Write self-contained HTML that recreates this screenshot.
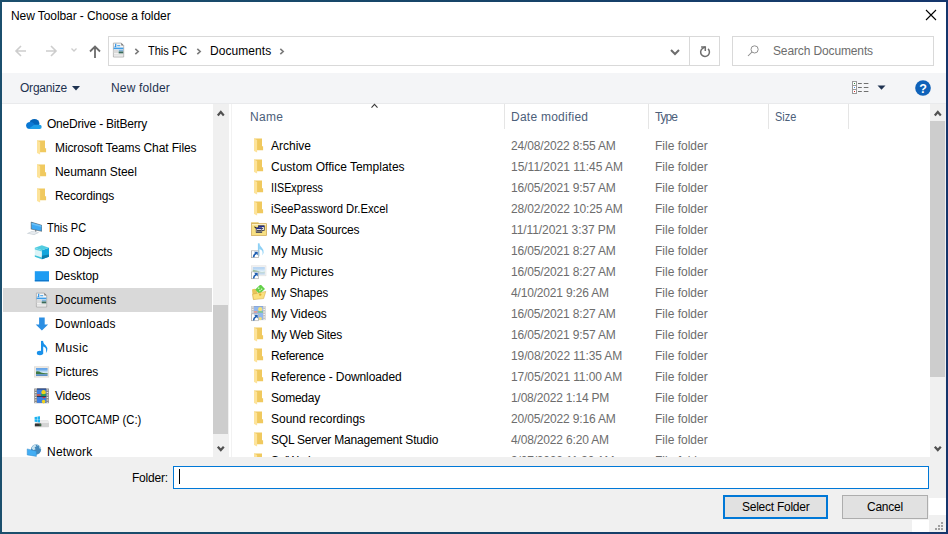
<!DOCTYPE html>
<html><head><meta charset="utf-8">
<style>
*{box-sizing:border-box}
html,body{margin:0;padding:0}
body{width:948px;height:534px;position:relative;overflow:hidden;background:#fff;font-family:"Liberation Sans",sans-serif;font-size:12px;color:#000}
.a{position:absolute}
.t{position:absolute;line-height:16px;white-space:nowrap}
svg{position:absolute;overflow:visible}
.hd{color:#4c607a}
.g{color:#6d6d6d}
.nv{color:#1e3250}
</style></head><body>
<svg width="0" height="0" style="position:absolute;left:0;top:0"><defs>
<linearGradient id="sky" x1="0" y1="0" x2="0" y2="1"><stop offset="0" stop-color="#3d8ee6"/><stop offset="0.5" stop-color="#cfe6f5"/><stop offset="1" stop-color="#e6f2f8"/></linearGradient>
<linearGradient id="skyl" x1="0" y1="0" x2="0" y2="1"><stop offset="0" stop-color="#a9cdf2"/><stop offset="0.6" stop-color="#e4f1f8"/><stop offset="1" stop-color="#eef6fa"/></linearGradient>
<symbol id="fold" viewBox="0 0 16 16">
  <path d="M3 0.5H11V8.2H12.1V12.2H3Z" fill="#f0c95f"/>
  <path d="M3 0.6L6.1 2V14.4L3 12.9Z" fill="#fde39a"/>
</symbol>
<symbol id="cloud" viewBox="0 0 16 16">
  <ellipse cx="8.4" cy="7.4" rx="5" ry="4.4" fill="#0364b8"/>
  <ellipse cx="4.3" cy="9.6" rx="4.2" ry="3.5" fill="#0a78d4"/>
  <path d="M2.2 13.1L8.2 8.7H13.4A2.2 2.2 0 0 1 13.6 13.1Z" fill="#1d9ee8"/>
</symbol>
<symbol id="pc" viewBox="0 0 16 16">
  <path d="M0.6 13.4L6 10.9L13.4 12.4L8.2 15Z" fill="#ccd3d9"/>
  <path d="M2.5 13.3L6.2 11.6L11.6 12.6L8 14.3Z" fill="#e6eaee"/>
  <rect x="9" y="9.6" width="1.4" height="2.2" fill="#9aa0a6"/>
  <path d="M5.2 2.1L15.75 5.3V11.3L5.2 9.1Z" fill="#3ea9f4" stroke="#3d3d3d" stroke-width="0.5"/>
  <path d="M5.6 2.7L15.3 5.6V7L5.6 4.6Z" fill="#6cc0f7"/>
</symbol>
<symbol id="cube" viewBox="0 0 16 16">
  <path d="M0.8 3.8L7.9 6.3V15.2L0.8 12.7Z" fill="#dcf4f7"/>
  <path d="M7.9 6.3L15 3.8V12.7L7.9 15.2Z" fill="#12a6dc"/>
  <path d="M0.8 3.8L7.9 1.3L15 3.8L7.9 6.3Z" fill="#52cce0"/>
  <path d="M0.8 3.8L7.9 6.3V7.6L0.8 5.4Z" fill="#62d2e4"/>
  <path d="M0.8 11.2L7.9 13.5V15.2L0.8 12.7Z" fill="#3cc2d9"/>
  <path d="M7.9 11.8L15 10.6V12.7L7.9 15.2Z" fill="#0b7fae"/>
</symbol>
<symbol id="desk" viewBox="0 0 16 16">
  <rect x="0.8" y="3.2" width="14.2" height="10.1" fill="#1e9cf2"/>
  <rect x="0.8" y="12.2" width="14.2" height="1.1" fill="#0c6fc4"/>
</symbol>
<symbol id="docs" viewBox="0 0 16 16">
  <path d="M2.4 1.1H10.3L12.7 3.5V15H2.4Z" fill="#f7f7f7" stroke="#a8a8a8" stroke-width="0.8"/>
  <path d="M10.3 1.1V3.5H12.7Z" fill="#6b6b6b"/>
  <path d="M4.1 1.8H5.3V5.2H3.5V4.2H4.1Z" fill="#2b8fe3"/>
  <rect x="6.2" y="3" width="3" height="1.3" fill="#5eaeea"/>
  <rect x="2.6" y="5.6" width="9.8" height="1.6" fill="#3d9de9"/>
  <rect x="2.6" y="7.7" width="4.4" height="3.5" fill="#dadada"/>
  <rect x="7.6" y="7.7" width="4.6" height="1.8" fill="#7fb2da"/>
  <rect x="7.6" y="9.5" width="4.6" height="1.9" fill="#3a6a58"/>
  <rect x="2.6" y="12.4" width="9.8" height="1" fill="#d4d4d4"/>
</symbol>
<symbol id="down" viewBox="0 0 16 16">
  <path d="M5.1 1.5H10.7V8.5H14.1L7.9 14.6L1.7 8.5H5.1Z" fill="#2c8fe3"/>
</symbol>
<symbol id="music" viewBox="0 0 16 16">
  <rect x="7" y="0.9" width="2.2" height="13" fill="#1a91ea"/>
  <ellipse cx="5.9" cy="13" rx="3.1" ry="2.2" fill="#1a91ea"/>
  <path d="M8.5 0.9Q9.6 3.6 11.8 5.6Q13.9 7.6 13.2 10.6L11.9 13.2Q12.6 9.6 11.6 8.1Q10.6 6.9 8.5 6.2Z" fill="#1a91ea"/>
</symbol>
<symbol id="pics" viewBox="0 0 16 16">
  <rect x="0.6" y="2.8" width="14.2" height="10.3" fill="#efebe5" stroke="#d6d2cc" stroke-width="0.6"/>
  <rect x="2" y="4.2" width="11.6" height="7.8" fill="url(#sky)"/>
  <path d="M2 7.4Q5 6.8 7 8.6Q10 9.6 13.6 9.2V10.2H2Z" fill="#3f7a45"/>
  <rect x="2" y="10.2" width="11.6" height="1.8" fill="#5b8fc4"/>
</symbol>
<symbol id="vids" viewBox="0 0 16 16">
  <rect x="0.2" y="0.5" width="14.7" height="14.7" fill="#8a8a8a"/>
  <g fill="#e6e6e6"><rect x="0.9" y="1.5" width="1.6" height="1"/><rect x="0.9" y="4" width="1.6" height="1"/><rect x="0.9" y="6.5" width="1.6" height="1"/><rect x="0.9" y="9" width="1.6" height="1"/><rect x="0.9" y="11.5" width="1.6" height="1"/><rect x="0.9" y="14" width="1.6" height="0.8"/>
  <rect x="12.6" y="1.5" width="1.6" height="1"/><rect x="12.6" y="4" width="1.6" height="1"/><rect x="12.6" y="6.5" width="1.6" height="1"/><rect x="12.6" y="9" width="1.6" height="1"/><rect x="12.6" y="11.5" width="1.6" height="1"/><rect x="12.6" y="14" width="1.6" height="0.8"/></g>
  <rect x="3" y="1.2" width="9.2" height="13.6" fill="#3b7fe3"/>
  <rect x="3" y="0.5" width="9.2" height="1" fill="#1b3570"/>
  <circle cx="9.6" cy="4.2" r="2.2" fill="#f1d21c"/>
  <rect x="6.8" y="6.2" width="5.4" height="1.6" fill="#2aa23e"/>
  <rect x="3" y="6.2" width="3.6" height="1.6" fill="#e2503a"/>
  <rect x="3" y="8" width="9.2" height="0.7" fill="#222"/>
  <circle cx="9.6" cy="13.6" r="1.8" fill="#f1d21c"/>
  <rect x="8.6" y="9" width="2.6" height="1.2" fill="#d33"/>
</symbol>
<symbol id="drive" viewBox="0 0 16 16">
  <path d="M1.2 11.2L3.4 8.2H14L15 11.2V14.6Q15 15.2 14.4 15.2H1.2Q0.6 15.2 0.6 14.6V11.8Z" fill="#d4d4d4"/>
  <path d="M3.4 8.2H14L14.9 11H1.3Z" fill="#ededed"/>
  <rect x="0.9" y="11.6" width="6.4" height="2.6" rx="0.5" fill="#333"/>
  <rect x="5.5" y="12.5" width="1.4" height="0.9" fill="#3cc15a"/>
  <path d="M0.6 5.1L3 4.7V7.2H0.6Z M3.4 4.6L6 4.2V7.2H3.4Z M0.6 7.6H3V10.1L0.6 9.8Z M3.4 7.6H6V10.6L3.4 10.2Z" fill="#1db2f0"/>
</symbol>
<symbol id="net" viewBox="0 0 16 16">
  <circle cx="10" cy="6.6" r="5.1" fill="#4388ba"/>
  <path d="M5.4 5.2Q6.5 2.4 9.2 1.6L10.4 3.2L8.6 4.6L9.6 6.2L7.4 7.2Z" fill="#c6e2ef"/>
  <path d="M12.6 2.3Q14.8 3.8 15 6.4L13.6 5.6L13 3.8Z" fill="#b8dbec"/>
  <path d="M10.8 1.5Q12 1.7 12.6 2.3L11.4 3Z" fill="#9fcfe6"/>
  <path d="M1.2 5.9L10.4 8.2V13.4L1.2 11.9Z" fill="#43aef4" stroke="#2f86c8" stroke-width="0.45"/>
</symbol>
<symbol id="ds" viewBox="0 0 16 16">
  <path d="M0.6 0H6.8L8.2 1.7H0.6Z" fill="#f3e29a" stroke="#d8bc6a" stroke-width="0.5"/>
  <rect x="0.6" y="1.7" width="15" height="11.7" fill="#f7e083" stroke="#cda24a" stroke-width="0.7"/>
  <rect x="1" y="2" width="14" height="1.2" fill="#fbf0c2"/>
  <path d="M3 4.4L5 5L4.5 6.8Z" fill="#111"/>
  <rect x="7.6" y="3.8" width="5.6" height="4.6" fill="#fff" stroke="#151530" stroke-width="0.7"/>
  <rect x="7.6" y="3.8" width="5.6" height="1.3" fill="#23308f"/>
  <rect x="8.4" y="6" width="3.4" height="0.9" fill="#222"/>
  <rect x="5.2" y="5.8" width="5.6" height="4.8" fill="#fff" stroke="#151530" stroke-width="0.7"/>
  <rect x="5.2" y="5.8" width="5.6" height="1.3" fill="#23308f"/>
  <rect x="6" y="7.9" width="4" height="0.9" fill="#222"/>
  <rect x="6" y="9.3" width="4" height="0.8" fill="#444"/>
</symbol>
<symbol id="sc" viewBox="0 0 8 8">
  <rect x="0.4" y="0.4" width="7.2" height="7.2" fill="#fff" stroke="#a9a9a9" stroke-width="0.8"/>
  <path d="M3.1 1.4H6.9V5.2Z" fill="#1f5eb0"/><path d="M2.7 7.2Q2.6 4.6 5.3 3.1" stroke="#1f5eb0" stroke-width="1.7" fill="none"/>
</symbol>
<symbol id="mmus" viewBox="0 0 16 16">
  <rect x="6.9" y="0.3" width="1.6" height="13" fill="#8dd0f5"/>
  <path d="M8.2 0.3Q9 3 10.9 4.8Q13 6.8 12.6 9.8L11.4 12.6Q12 9.2 11.2 7.8Q10.2 6.6 8.2 6Z" fill="#8dd0f5"/>
  <use href="#sc" x="0" y="7.3" width="7.8" height="7.8"/>
</symbol>
<symbol id="mpic" viewBox="0 0 16 16">
  <rect x="0.4" y="1.8" width="14.6" height="10" fill="#f2f2f2" stroke="#e0e0e0" stroke-width="0.6"/>
  <rect x="1.8" y="3.2" width="12" height="7.4" fill="url(#skyl)"/>
  <path d="M1.8 5.8Q6 6 8 7.4Q11 8.2 13.8 7.8V8.6H1.8Z" fill="#9fc2a0"/>
  <rect x="1.8" y="8.6" width="12" height="2" fill="#c2d8ea"/>
  <use href="#sc" x="0" y="7.4" width="7.8" height="7.8"/>
</symbol>
<symbol id="shapes" viewBox="0 0 16 16">
  <path d="M1 4.5L3.5 3.8L5 4.6L6 4.3L7 13.8L2 14.4Z" fill="#e8c45a"/>
  <path d="M4.2 4.4L9.6 -0.6L14 4L8.4 9Z" fill="#62d048"/>
  <path d="M6.5 3L8 2.2L8.8 3.2L7.4 4Z M9.6 4.2L10.8 3.3L11.5 4.3L10.4 5Z M8 5.6L9 4.8L9.8 5.8L8.8 6.6Z" fill="#d8f5d0"/>
  <path d="M1.6 9.2L14.8 6.4L12.6 13.6L2.4 14.6Z" fill="#fbe07e" stroke="#d0a23e" stroke-width="0.5"/>
  <circle cx="9.2" cy="9.6" r="1.2" fill="#e2b030"/>
</symbol>
<symbol id="mvid" viewBox="0 0 16 16">
  <rect x="0.2" y="-0.6" width="14.4" height="14.7" fill="#c4c4c4"/>
  <g fill="#f0f0f0"><rect x="0.9" y="0.5" width="1.6" height="1"/><rect x="0.9" y="3" width="1.6" height="1"/><rect x="0.9" y="5.5" width="1.6" height="1"/>
  <rect x="12.4" y="0.5" width="1.6" height="1"/><rect x="12.4" y="3" width="1.6" height="1"/><rect x="12.4" y="5.5" width="1.6" height="1"/><rect x="12.4" y="8" width="1.6" height="1"/><rect x="12.4" y="10.5" width="1.6" height="1"/><rect x="12.4" y="13" width="1.6" height="0.8"/></g>
  <rect x="3" y="0" width="9" height="14" fill="#92b8ee"/>
  <rect x="3" y="-0.6" width="9" height="1" fill="#8090b0"/>
  <circle cx="9.2" cy="3.2" r="2.1" fill="#f3e07a"/>
  <rect x="6.6" y="5.2" width="5.4" height="1.5" fill="#7cc88a"/>
  <rect x="3" y="5.2" width="3.4" height="1.5" fill="#ee9a88"/>
  <circle cx="9.2" cy="12.6" r="1.7" fill="#f3e07a"/>
  <use href="#sc" x="0" y="7.4" width="7.8" height="7.8"/>
</symbol>
</defs></svg>
<!-- window borders -->
<div class="a" style="left:0;top:0;width:948px;height:2px;background:linear-gradient(90deg,#1b4f6d,#164468 50%,#15366c)"></div>
<div class="a" style="left:0;top:0;width:2px;height:534px;background:#1b4f6d"></div>
<div class="a" style="right:0;top:0;width:2px;height:534px;background:#15356b"></div>
<div class="a" style="left:0;bottom:0;width:948px;height:2px;background:linear-gradient(90deg,#1b4f6d,#164468 50%,#15366c)"></div>

<!-- title -->
<div class="t" style="left:11px;top:8px;letter-spacing:-0.08px">New Toolbar - Choose a folder</div>
<svg style="left:926px;top:10px" width="10" height="10"><path d="M0 0L10 10M10 0L0 10" stroke="#000" stroke-width="1.1"/></svg>

<!-- nav buttons -->
<svg style="left:15px;top:45px" width="12" height="12"><path d="M1 6H11M6 1L1 6L6 11" stroke="#cdcdcd" stroke-width="1.6" fill="none"/></svg>
<svg style="left:45px;top:45px" width="12" height="12"><path d="M1 6H11M6 1L11 6L6 11" stroke="#cdcdcd" stroke-width="1.6" fill="none"/></svg>
<svg style="left:71px;top:48px" width="6" height="4"><path d="M0.5 0.5L3 3L5.5 0.5" stroke="#cdcdcd" stroke-width="1.3" fill="none"/></svg>
<svg style="left:89px;top:45px" width="12" height="13"><path d="M6 1.5V13M1 6.5L6 1.5L11 6.5" stroke="#6b6b6b" stroke-width="1.8" fill="none"/></svg>

<!-- address bar -->
<div class="a" style="left:108px;top:36px;width:612px;height:30px;border:1px solid #d9d9d9"></div>
<div class="a" style="left:689px;top:36px;width:1px;height:30px;background:#d9d9d9"></div>
<svg style="left:111px;top:41.9px" width="16" height="16"><use href="#docs" width="16" height="16"/></svg>
<svg style="left:134px;top:48px" width="6" height="7"><path d="M1.3 0.8L4.2 3.5L1.3 6.2" stroke="#7a7a7a" stroke-width="1.6" fill="none"/></svg>
<div class="t" style="left:148px;top:43px;transform:scaleX(0.917);transform-origin:0 0">This PC</div>
<svg style="left:196px;top:48px" width="6" height="7"><path d="M1.3 0.8L4.2 3.5L1.3 6.2" stroke="#7a7a7a" stroke-width="1.6" fill="none"/></svg>
<div class="t" style="left:210px;top:43px;letter-spacing:0.06px">Documents</div>
<svg style="left:279px;top:48px" width="6" height="7"><path d="M1.3 0.8L4.2 3.5L1.3 6.2" stroke="#7a7a7a" stroke-width="1.6" fill="none"/></svg>
<svg style="left:670px;top:49px" width="10" height="6"><path d="M1 1L5 5L9 1" stroke="#6d6d6d" stroke-width="2" fill="none"/></svg>
<svg style="left:699px;top:45px" width="12" height="12"><path d="M9.1 3.9A4.4 4.4 0 1 1 3.2 3.7L6.3 1.9" stroke="#6e6e6e" stroke-width="1.5" fill="none"/><path d="M2.1 1.9H6.3V5.9" stroke="#6e6e6e" stroke-width="1.5" fill="none"/></svg>

<!-- search -->
<div class="a" style="left:732px;top:36px;width:202px;height:30px;border:1px solid #d9d9d9"></div>
<svg style="left:747px;top:45px" width="12" height="12"><circle cx="7.6" cy="4.4" r="3.6" stroke="#8a8a8a" stroke-width="0.95" fill="none"/><path d="M5 7L1 11" stroke="#8a8a8a" stroke-width="1.05"/></svg>
<div class="t g" style="left:773px;top:43px;letter-spacing:-0.13px">Search Documents</div>

<!-- toolbar -->
<div class="a" style="left:2px;top:73px;width:944px;height:30px;background:#f4f5f7"></div>
<div class="a" style="left:2px;top:103px;width:944px;height:1px;background:#e9eaec"></div>
<div class="t nv" style="left:20px;top:80px;letter-spacing:-0.21px">Organize</div>
<svg style="left:72px;top:86px" width="8" height="5"><path d="M0 0H8L4 4.5Z" fill="#1e3250"/></svg>
<div class="t nv" style="left:111px;top:80px;letter-spacing:0.16px">New folder</div>
<svg style="left:852px;top:81px" width="18" height="14">
  <rect x="0.5" y="0.5" width="4" height="12" fill="#fff" stroke="#9a9a9a"/>
  <path d="M0.5 4.5H4.5M0.5 8.5H4.5" stroke="#9a9a9a"/>
  <rect x="2" y="2" width="1" height="1" fill="#2e8b3e"/>
  <rect x="2" y="6" width="1" height="1" fill="#3a86e0"/>
  <rect x="2" y="10" width="1" height="1" fill="#d62c2c"/>
  <path d="M6 2.5H9.8M11.8 2.5H16.4M6 6.5H9.8M11.8 6.5H16.4M6 10.5H9.8M11.8 10.5H16.4" stroke="#707070" stroke-width="1.2"/>
</svg>
<svg style="left:877px;top:85px" width="9" height="5"><path d="M0.5 0.5H8.5L4.5 4.7Z" fill="#1e3250"/></svg>
<svg style="left:915px;top:80px" width="16" height="16"><circle cx="8" cy="8" r="7.8" fill="#0f62b9"/><text x="8" y="12.6" font-family="Liberation Sans" font-weight="bold" font-size="12.5" fill="#fff" text-anchor="middle">?</text></svg>

<!-- nav pane -->
<div class="a" style="left:3px;top:288px;width:209px;height:24px;background:#d9d9d9"></div>
<div class="a" style="left:213px;top:104px;width:16px;height:353px;background:#f0f0f0"></div>
<div class="a" style="left:213px;top:305px;width:15px;height:129px;background:#cdcdcd"></div>
<svg style="left:217px;top:110px" width="8" height="6"><path d="M0.8 5.4L3.8 2L6.8 5.4" stroke="#505050" stroke-width="2.2" fill="none"/></svg>
<svg style="left:217px;top:446px" width="8" height="6"><path d="M0.8 0.7L3.8 4.1L6.8 0.7" stroke="#505050" stroke-width="2.2" fill="none"/></svg>
<div class="a" style="left:231px;top:104px;width:1px;height:353px;background:#f2f2f2"></div>
<div class="a" style="left:2px;top:104px;width:211px;height:353px;overflow:hidden">
<svg style="left:24px;top:11.7px" width="16" height="16"><use href="#cloud" width="16" height="16"/></svg><div class="t" style="left:45px;top:11.9px;letter-spacing:-0.21px">OneDrive - BitBerry</div>
<svg style="left:32px;top:35.6px" width="16" height="16"><use href="#fold" width="16" height="16"/></svg><div class="t" style="left:53px;top:35.8px;letter-spacing:-0.12px">Microsoft Teams Chat Files</div>
<svg style="left:32px;top:59.6px" width="16" height="16"><use href="#fold" width="16" height="16"/></svg><div class="t" style="left:53px;top:59.8px;letter-spacing:-0.07px">Neumann Steel</div>
<svg style="left:32px;top:83.5px" width="16" height="16"><use href="#fold" width="16" height="16"/></svg><div class="t" style="left:53px;top:83.7px;letter-spacing:-0.17px">Recordings</div>
<svg style="left:24px;top:115.5px" width="16" height="16"><use href="#pc" width="16" height="16"/></svg><div class="t" style="left:45px;top:115.7px;transform:scaleX(0.917);transform-origin:0 0">This PC</div>
<svg style="left:32px;top:139.5px" width="16" height="16"><use href="#cube" width="16" height="16"/></svg><div class="t" style="left:53px;top:139.7px;letter-spacing:-0.22px">3D Objects</div>
<svg style="left:32px;top:163.5px" width="16" height="16"><use href="#desk" width="16" height="16"/></svg><div class="t" style="left:53px;top:163.7px;letter-spacing:-0.05px">Desktop</div>
<svg style="left:32px;top:187.5px" width="16" height="16"><use href="#docs" width="16" height="16"/></svg><div class="t" style="left:53px;top:187.7px;letter-spacing:0.06px">Documents</div>
<svg style="left:32px;top:211.5px" width="16" height="16"><use href="#down" width="16" height="16"/></svg><div class="t" style="left:53px;top:211.7px;letter-spacing:0.15px">Downloads</div>
<svg style="left:32px;top:235.5px" width="16" height="16"><use href="#music" width="16" height="16"/></svg><div class="t" style="left:53px;top:235.7px;letter-spacing:0.42px">Music</div>
<svg style="left:32px;top:259.5px" width="16" height="16"><use href="#pics" width="16" height="16"/></svg><div class="t" style="left:53px;top:259.7px">Pictures</div>
<svg style="left:32px;top:283.5px" width="16" height="16"><use href="#vids" width="16" height="16"/></svg><div class="t" style="left:53px;top:283.7px;letter-spacing:-0.20px">Videos</div>
<svg style="left:32px;top:307.5px" width="16" height="16"><use href="#drive" width="16" height="16"/></svg><div class="t" style="left:53px;top:307.7px;transform:scaleX(0.940);transform-origin:0 0">BOOTCAMP (C:)</div>
<svg style="left:24px;top:339.3px" width="16" height="16"><use href="#net" width="16" height="16"/></svg><div class="t" style="left:45px;top:339.5px;letter-spacing:0.22px">Network</div>
</div>


<!-- list header -->
<div class="t hd" style="left:250px;top:109px;letter-spacing:0.33px">Name</div>
<svg style="left:370px;top:103px" width="9" height="6"><path d="M1.5 4.6L4.5 1.4L7.5 4.6" stroke="#3a3a3a" stroke-width="1.1" fill="none"/></svg>
<div class="a" style="left:504px;top:104px;width:1px;height:25px;background:#e5e5e5"></div>
<div class="t hd" style="left:511px;top:109px;letter-spacing:0.25px">Date modified</div>
<div class="a" style="left:648px;top:104px;width:1px;height:25px;background:#e5e5e5"></div>
<div class="t hd" style="left:655px;top:109px;letter-spacing:-1.07px">Type</div>
<div class="a" style="left:768px;top:104px;width:1px;height:25px;background:#e5e5e5"></div>
<div class="t hd" style="left:775px;top:109px;transform:scaleX(0.909);transform-origin:0 0">Size</div>
<div class="a" style="left:848px;top:104px;width:1px;height:25px;background:#e5e5e5"></div>
<div class="a" style="left:231px;top:129px;width:699px;height:328px;overflow:hidden">
<svg style="left:20px;top:8.6px" width="16" height="16"><use href="#fold" width="16" height="16"/></svg><div class="t" style="left:40px;top:8.8px">Archive</div><div class="t g" style="left:280px;top:8.8px;letter-spacing:-0.15px">24/08/2022 8:55 AM</div><div class="t g" style="left:424px;top:8.8px">File folder</div>
<svg style="left:20px;top:29.6px" width="16" height="16"><use href="#fold" width="16" height="16"/></svg><div class="t" style="left:40px;top:29.8px">Custom Office Templates</div><div class="t g" style="left:280px;top:29.8px;letter-spacing:-0.02px">15/11/2021 11:45 AM</div><div class="t g" style="left:424px;top:29.8px">File folder</div>
<svg style="left:20px;top:50.6px" width="16" height="16"><use href="#fold" width="16" height="16"/></svg><div class="t" style="left:40px;top:50.8px;transform:scaleX(0.895);transform-origin:0 0">IISExpress</div><div class="t g" style="left:280px;top:50.8px;letter-spacing:-0.15px">16/05/2021 9:57 AM</div><div class="t g" style="left:424px;top:50.8px">File folder</div>
<svg style="left:20px;top:71.6px" width="16" height="16"><use href="#fold" width="16" height="16"/></svg><div class="t" style="left:40px;top:71.8px;transform:scaleX(0.938);transform-origin:0 0">iSeePassword Dr.Excel</div><div class="t g" style="left:280px;top:71.8px;letter-spacing:-0.13px">28/02/2022 10:25 AM</div><div class="t g" style="left:424px;top:71.8px">File folder</div>
<svg style="left:20px;top:92.6px" width="16" height="16"><use href="#ds" width="16" height="16"/></svg><div class="t" style="left:40px;top:92.8px;letter-spacing:-0.26px">My Data Sources</div><div class="t g" style="left:280px;top:92.8px;letter-spacing:-0.09px">11/11/2021 3:37 PM</div><div class="t g" style="left:424px;top:92.8px">File folder</div>
<svg style="left:20px;top:113.6px" width="16" height="16"><use href="#mmus" width="16" height="16"/></svg><div class="t" style="left:40px;top:113.8px;letter-spacing:0.20px">My Music</div><div class="t g" style="left:280px;top:113.8px;letter-spacing:-0.15px">16/05/2021 8:27 AM</div><div class="t g" style="left:424px;top:113.8px">File folder</div>
<svg style="left:20px;top:134.6px" width="16" height="16"><use href="#mpic" width="16" height="16"/></svg><div class="t" style="left:40px;top:134.8px">My Pictures</div><div class="t g" style="left:280px;top:134.8px;letter-spacing:-0.15px">16/05/2021 8:27 AM</div><div class="t g" style="left:424px;top:134.8px">File folder</div>
<svg style="left:20px;top:155.6px" width="16" height="16"><use href="#shapes" width="16" height="16"/></svg><div class="t" style="left:40px;top:155.8px;transform:scaleX(0.953);transform-origin:0 0">My Shapes</div><div class="t g" style="left:280px;top:155.8px;letter-spacing:-0.17px">4/10/2021 9:26 AM</div><div class="t g" style="left:424px;top:155.8px">File folder</div>
<svg style="left:20px;top:176.6px" width="16" height="16"><use href="#mvid" width="16" height="16"/></svg><div class="t" style="left:40px;top:176.8px">My Videos</div><div class="t g" style="left:280px;top:176.8px;letter-spacing:-0.15px">16/05/2021 8:27 AM</div><div class="t g" style="left:424px;top:176.8px">File folder</div>
<svg style="left:20px;top:197.6px" width="16" height="16"><use href="#fold" width="16" height="16"/></svg><div class="t" style="left:40px;top:197.8px;letter-spacing:-0.24px">My Web Sites</div><div class="t g" style="left:280px;top:197.8px;letter-spacing:-0.15px">16/05/2021 9:57 AM</div><div class="t g" style="left:424px;top:197.8px">File folder</div>
<svg style="left:20px;top:218.6px" width="16" height="16"><use href="#fold" width="16" height="16"/></svg><div class="t" style="left:40px;top:218.8px;letter-spacing:-0.31px">Reference</div><div class="t g" style="left:280px;top:218.8px;letter-spacing:-0.11px">19/08/2022 11:35 AM</div><div class="t g" style="left:424px;top:218.8px">File folder</div>
<svg style="left:20px;top:239.6px" width="16" height="16"><use href="#fold" width="16" height="16"/></svg><div class="t" style="left:40px;top:239.8px;letter-spacing:-0.10px">Reference - Downloaded</div><div class="t g" style="left:280px;top:239.8px;letter-spacing:-0.11px">17/05/2021 11:00 AM</div><div class="t g" style="left:424px;top:239.8px">File folder</div>
<svg style="left:20px;top:260.6px" width="16" height="16"><use href="#fold" width="16" height="16"/></svg><div class="t" style="left:40px;top:260.8px;letter-spacing:-0.25px">Someday</div><div class="t g" style="left:280px;top:260.8px;letter-spacing:-0.19px">1/08/2022 1:14 PM</div><div class="t g" style="left:424px;top:260.8px">File folder</div>
<svg style="left:20px;top:281.6px" width="16" height="16"><use href="#fold" width="16" height="16"/></svg><div class="t" style="left:40px;top:281.8px">Sound recordings</div><div class="t g" style="left:280px;top:281.8px;letter-spacing:-0.15px">20/05/2022 9:16 AM</div><div class="t g" style="left:424px;top:281.8px">File folder</div>
<svg style="left:20px;top:302.6px" width="16" height="16"><use href="#fold" width="16" height="16"/></svg><div class="t" style="left:40px;top:302.8px;letter-spacing:-0.21px">SQL Server Management Studio</div><div class="t g" style="left:280px;top:302.8px;letter-spacing:-0.17px">4/08/2022 6:20 AM</div><div class="t g" style="left:424px;top:302.8px">File folder</div>
<svg style="left:20px;top:323.6px" width="16" height="16"><use href="#fold" width="16" height="16"/></svg><div class="t" style="left:40px;top:323.8px;letter-spacing:-0.36px">SqlWorkspace</div><div class="t g" style="left:280px;top:323.8px;letter-spacing:-0.18px">3/07/2022 11:30 AM</div><div class="t g" style="left:424px;top:323.8px">File folder</div>
</div>


<!-- list scrollbar -->
<div class="a" style="left:930px;top:104px;width:16px;height:353px;background:#f0f0f0"></div>
<div class="a" style="left:930px;top:121px;width:15px;height:256px;background:#cdcdcd"></div>
<svg style="left:934px;top:110px" width="8" height="6"><path d="M0.8 5.4L3.8 2L6.8 5.4" stroke="#505050" stroke-width="2.2" fill="none"/></svg>
<svg style="left:934px;top:446px" width="8" height="6"><path d="M0.8 0.7L3.8 4.1L6.8 0.7" stroke="#505050" stroke-width="2.2" fill="none"/></svg>

<!-- bottom panel -->
<div class="a" style="left:2px;top:457px;width:944px;height:75px;background:#f0f0f0"></div>
<div class="t" style="left:132px;top:470px;letter-spacing:-0.22px">Folder:</div>
<div class="a" style="left:173px;top:466px;width:756px;height:23px;border:1px solid #0078d7;background:#fff"></div>
<div class="a" style="left:179px;top:469px;width:1px;height:15px;background:#000"></div>
<div class="a" style="left:723px;top:495px;width:105px;height:24px;border:2px solid #0078d7;background:#e1e1e1"></div>
<div class="t" style="left:742px;top:499px;letter-spacing:-0.25px">Select Folder</div>
<div class="a" style="left:842px;top:495px;width:86px;height:24px;border:1px solid #adadad;background:#e1e1e1"></div>
<div class="t" style="left:867px;top:499px;letter-spacing:-0.26px">Cancel</div>
<div class="a" style="left:929px;top:498px;width:17px;height:17px;background:#fff"></div>
<div class="a" style="left:912px;top:520px;width:17px;height:12px;background:#fff"></div>
<svg style="left:935px;top:522px" width="10" height="10" fill="#a0a0a0">
  <rect x="6" y="0" width="2" height="2"/><rect x="3" y="3" width="2" height="2"/><rect x="6" y="3" width="2" height="2"/>
  <rect x="0" y="6" width="2" height="2"/><rect x="3" y="6" width="2" height="2"/><rect x="6" y="6" width="2" height="2"/>
</svg>
</body></html>
